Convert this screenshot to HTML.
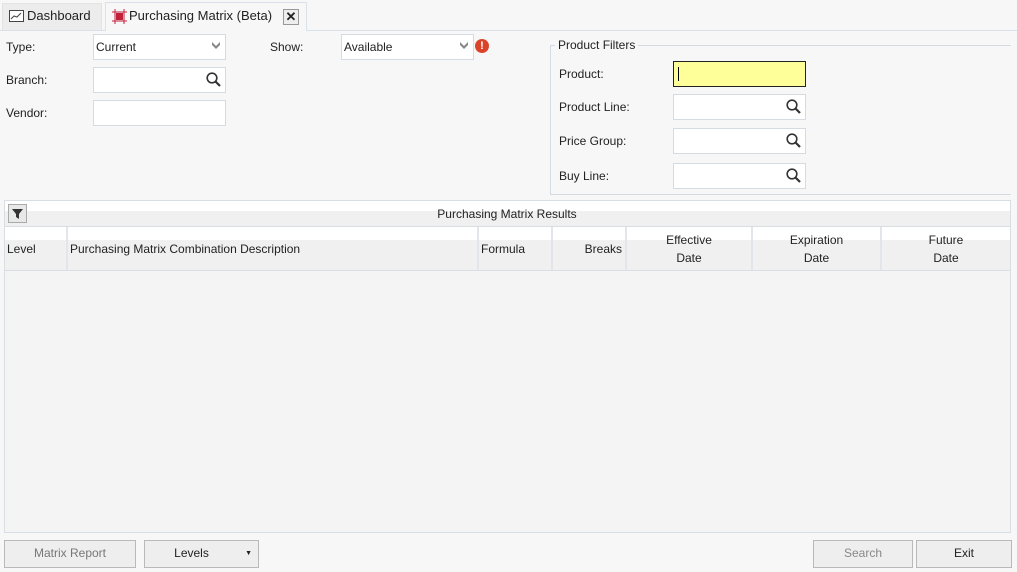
<!DOCTYPE html><html><head><style>
body{margin:0;width:1017px;height:572px;background:#f7f7f7;font-family:"Liberation Sans",sans-serif;font-size:12px;color:#222;position:relative;overflow:hidden}
.a{position:absolute}
.in{position:absolute;background:#fff;border:1px solid #d5dbe3;box-sizing:border-box}
.lb{position:absolute;line-height:14px}
.btn{position:absolute;border:1px solid #b9b9b9;background:#eeeeee;box-sizing:border-box;text-align:center;line-height:25px}
.th{position:absolute;top:227px;height:43px;border-right:2px solid #e2e6ea;box-sizing:border-box;display:flex;align-items:center;line-height:18px}
</style></head><body>
<div class="a" style="left:0;top:30px;width:1017px;height:1px;background:#d9e1ea"></div>
<div class="a" style="left:2px;top:3px;width:100px;height:27px;background:#ececec;border:1px solid #e3e3e3;border-bottom:none;box-sizing:border-box"></div>
<svg class="a" style="left:9px;top:10px" width="15" height="12"><rect x="0.5" y="0.5" width="14" height="11" fill="#fff" stroke="#444"/><polyline points="2,9 5,6 8,7 12,3" fill="none" stroke="#444"/></svg>
<div class="lb" style="left:27px;top:9px;font-size:13px">Dashboard</div>
<div class="a" style="left:105px;top:2px;width:202px;height:29px;background:#f7f7f7;border:1px solid #d9e1ea;border-bottom:none;box-sizing:border-box"></div>
<svg class="a" style="left:112px;top:9px" width="15" height="15"><path d="M3 0V15M12 0V15M0 3H15M0 12H15" stroke="#c0203a"/><rect x="4" y="4" width="7" height="7" fill="#c0203a"/></svg>
<div class="lb" style="left:129px;top:9px;font-size:13px">Purchasing Matrix (Beta)</div>
<div class="a" style="left:283px;top:9px;width:16px;height:16px;border:1px solid #999;background:#eee;box-sizing:border-box;font-weight:bold;font-size:13px;line-height:13px;text-align:center">✕</div>

<svg width="0" height="0" style="position:absolute"><defs>
<g id="mg"><circle cx="6" cy="6" r="4.8" fill="none" stroke="#333" stroke-width="1.6"/><path d="M9.5 9.5L14 14" stroke="#333" stroke-width="2.2"/></g>
<g id="ch"><path d="M1 1L5 5L9 1V4L5 8L1 4Z" fill="#888"/></g>
</defs></svg>

<div class="lb" style="left:6px;top:40px">Type:</div>
<div class="in" style="left:93px;top:34px;width:133px;height:26px"><span class="a" style="left:2px;top:5px">Current</span><svg class="a" style="right:4px;top:6px" width="10" height="9"><use href="#ch"/></svg></div>
<div class="lb" style="left:6px;top:73px">Branch:</div>
<div class="in" style="left:93px;top:67px;width:133px;height:26px"></div>
<div class="lb" style="left:6px;top:106px">Vendor:</div>
<div class="in" style="left:93px;top:100px;width:133px;height:26px"></div>
<div class="lb" style="left:270px;top:40px">Show:</div>
<div class="in" style="left:341px;top:34px;width:133px;height:26px"><span class="a" style="left:2px;top:5px">Available</span><svg class="a" style="right:4px;top:6px" width="10" height="9"><use href="#ch"/></svg></div>
<div class="a" style="left:475px;top:39px;width:14px;height:14px;border-radius:50%;background:#d9442b;color:#fff;font-weight:bold;font-size:11px;line-height:14px;text-align:center">!</div>

<div class="a" style="left:550px;top:45px;width:461px;height:150px;border:1px solid #d5dbe3;border-right:none;box-sizing:border-box"></div>
<div class="lb" style="left:555px;top:38px;background:#f7f7f7;padding:0 3px">Product Filters</div>
<div class="lb" style="left:559px;top:67px">Product:</div>
<div class="in" style="left:673px;top:61px;width:133px;height:26px;background:#ffff99;border-color:#222"><div class="a" style="left:4px;top:5px;width:1px;height:14px;background:#000"></div></div>
<div class="lb" style="left:559px;top:100px">Product Line:</div>
<div class="in" style="left:673px;top:94px;width:133px;height:26px"></div>
<div class="lb" style="left:559px;top:134px">Price Group:</div>
<div class="in" style="left:673px;top:128px;width:133px;height:26px"></div>
<div class="lb" style="left:559px;top:169px">Buy Line:</div>
<div class="in" style="left:673px;top:163px;width:133px;height:26px"></div>
<svg class="a" style="left:206px;top:72px" width="16" height="16"><use href="#mg"/></svg>
<svg class="a" style="left:786px;top:99px" width="16" height="16"><use href="#mg"/></svg>
<svg class="a" style="left:786px;top:133px" width="16" height="16"><use href="#mg"/></svg>
<svg class="a" style="left:786px;top:168px" width="16" height="16"><use href="#mg"/></svg>

<div class="a" style="left:4px;top:200px;width:1007px;height:333px;border:1px solid #d9dee4;box-sizing:border-box;background:#f4f4f4"></div>
<div class="a" style="left:5px;top:201px;width:1005px;height:25px;background:linear-gradient(#fff 0,#fff 40%,#f0f0f0 41%);border-bottom:1px solid #d9dee4"></div>
<div class="a" style="left:8px;top:204px;width:19px;height:19px;border:1px solid #aaa;background:#e8e8e8;box-sizing:border-box"><svg width="17" height="17"><path d="M3 4H14L10 9V14L7 12V9Z" fill="#333"/></svg></div>
<div class="lb" style="left:0;width:1014px;text-align:center;top:207px">Purchasing Matrix Results</div>
<div class="a" style="left:5px;top:227px;width:1005px;height:43px;background:linear-gradient(#fff 0,#fff 30%,#f0f0f0 31%);border-bottom:1px solid #d9dee4"></div>
<div class="th" style="left:5px;width:63px;padding-left:2px">Level</div>
<div class="th" style="left:68px;width:411px;padding-left:2px">Purchasing Matrix Combination Description</div>
<div class="th" style="left:479px;width:74px;padding-left:2px">Formula</div>
<div class="th" style="left:553px;width:74px;justify-content:flex-end;padding-right:3px">Breaks</div>
<div class="th" style="left:627px;width:126px;justify-content:center;text-align:center">Effective<br>Date</div>
<div class="th" style="left:753px;width:129px;justify-content:center;text-align:center">Expiration<br>Date</div>
<div class="th" style="left:882px;width:128px;justify-content:center;text-align:center;border-right:none">Future<br>Date</div>

<div class="btn" style="left:4px;top:540px;width:132px;height:28px;color:#777">Matrix Report</div>
<div class="btn" style="left:144px;top:540px;width:115px;height:28px"><span style="margin-right:20px">Levels</span><span class="a" style="right:6px;top:0;font-size:7px">▼</span></div>
<div class="btn" style="left:813px;top:540px;width:100px;height:28px;color:#888">Search</div>
<div class="btn" style="left:916px;top:540px;width:96px;height:28px">Exit</div>
</body></html>
